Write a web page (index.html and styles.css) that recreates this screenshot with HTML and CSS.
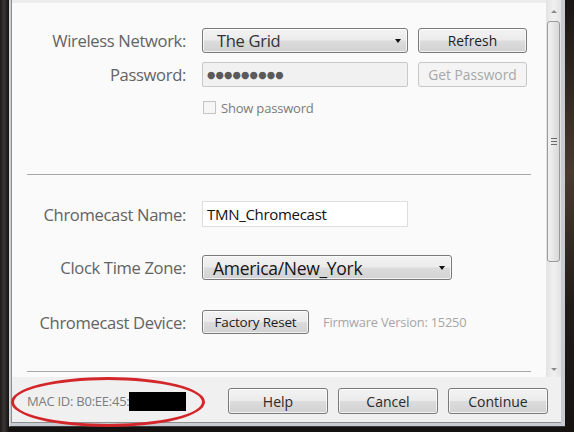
FILE: index.html
```html
<!DOCTYPE html>
<html>
<head>
<meta charset="utf-8">
<link rel="stylesheet" href="styles.css">
</head>
<body>
<div class="window">
  <div class="client">
    <div class="scroll">
      <div class="content">
        <div class="topstrip"></div>
        <div class="row r1">
          <span class="label">Wireless Network:</span>
          <div class="select sel-net"><span>The Grid</span><span class="arrow"></span></div>
          <button class="btn side">Refresh</button>
        </div>
        <div class="row r2">
          <span class="label">Password:</span>
          <div class="pwd">&#9679;&#9679;&#9679;&#9679;&#9679;&#9679;&#9679;&#9679;&#9679;</div>
          <button class="btn side disabled">Get Password</button>
        </div>
        <div class="check">
          <span class="box"></span><span class="checktext">Show password</span>
        </div>
        <div class="rule rule1"></div>
        <div class="row r3">
          <span class="label">Chromecast Name:</span>
          <div class="input">TMN_Chromecast</div>
        </div>
        <div class="row r4">
          <span class="label">Clock Time Zone:</span>
          <div class="select sel-tz"><span>America/New_York</span><span class="arrow"></span></div>
        </div>
        <div class="row r5">
          <span class="label">Chromecast Device:</span>
          <button class="btn reset">Factory Reset</button>
          <span class="fw">Firmware Version: 15250</span>
        </div>
        <div class="rule rule2"></div>
      </div>
      <div class="scrollbar">
        <span class="sarrow up"></span>
        <div class="thumb"><span class="grip"></span></div>
        <span class="sarrow down"></span>
      </div>
    </div>
    <div class="footer">
      <div class="mac">MAC ID: B0:EE:45:<span class="redact"></span></div>
      <div class="actions">
        <button class="btn foot">Help</button>
        <button class="btn foot">Cancel</button>
        <button class="btn foot">Continue</button>
      </div>
      <div class="circle"></div>
    </div>
  </div>
</div>
</body>
</html>
```
FILE: styles.css
```css
html, body {
  margin: 0;
  padding: 0;
}
body {
  width: 574px;
  height: 432px;
  overflow: hidden;
  background: linear-gradient(90deg, #1c1a19 0, #3a3633 4px, #141211 9px);
  font-family: "Open Sans", "Liberation Sans", sans-serif;
  position: relative;
}
body::after {
  content: "";
  position: absolute;
  right: 0;
  top: 0;
  width: 9px;
  height: 432px;
  background: linear-gradient(180deg, #1a1614 0, #4a3a30 40%, #221c19 70%, #151210 100%);
}
.window {
  margin-left: 9px;
  width: 557px;
  height: 427px;
  background: #c8ccd2;
  border-left: 1px solid #d8dade;
  border-right: 1px solid #5a5a5a;
  border-bottom: 1px solid #3a3a3a;
  box-sizing: border-box;
  padding: 0 4px 3px 1px;
}
.client {
  width: 550px;
  height: 423px;
  border-left: 1px solid #8e8f8f;
  border-bottom: 1px solid #8e8f8f;
  box-sizing: border-box;
  background: #f0f0f0;
  display: flex;
  flex-direction: column;
}
.scroll {
  display: flex;
  height: 377px;
  background: #fafafa;
}
.content {
  width: 534px;
  box-sizing: border-box;
  padding: 0 15px 0 15px;
  font-size: 16.6px;
  color: #636363;
}
.topstrip {
  height: 3px;
  margin: 0 -15px;
  background: #ececec;
}
.row {
  display: flex;
  align-items: center;
}
.label {
  width: 159px;
  margin-right: 16px;
  text-align: right;
  white-space: nowrap;
  letter-spacing: -0.35px;
}
.r1 { margin-top: 25px; height: 25px; }
.r2 { margin-top: 9px; height: 25px; }
.r3 { margin-top: 26px; height: 26px; }
.r4 { margin-top: 28px; height: 25px; }
.r5 { margin-top: 30px; height: 24px; }

.select, .btn {
  box-sizing: border-box;
  border: 1px solid #7a7a7a;
  border-radius: 3px;
  background: linear-gradient(180deg, #f3f3f3 0%, #ebebeb 48%, #dcdcdc 52%, #d2d2d2 100%);
  box-shadow: inset 0 0 0 1px rgba(255,255,255,0.7);
  color: #1e1e1e;
  font-family: "Open Sans", "Liberation Sans", sans-serif;
}
.select {
  height: 25px;
  display: flex;
  align-items: center;
  justify-content: space-between;
  padding: 0 6px 0 14px;
  font-size: 16.5px;
  letter-spacing: -0.3px;
  color: #333;
}
.arrow {
  width: 0;
  height: 0;
  border-left: 3.5px solid transparent;
  border-right: 3.5px solid transparent;
  border-top: 4px solid #111;
}
.sel-net { width: 206px; }
.sel-tz { width: 250px; padding-left: 10px; font-size: 17.5px; color: #151515; }
.btn {
  height: 25px;
  padding: 0;
  font-size: 13.8px;
}
.btn.side {
  width: 109px;
  margin-left: 10px;
}
.btn.disabled {
  color: #a8a8a8;
  border-color: #c6c6c6;
  background: #f4f4f4;
  box-shadow: none;
}
.pwd {
  width: 206px;
  height: 25px;
  box-sizing: border-box;
  border: 1px solid #c8c8c8;
  border-radius: 2px;
  background: #f1f1f1;
  color: #5a5a5a;
  font-size: 9.6px;
  letter-spacing: 0.15px;
  padding-left: 4px;
  display: flex;
  align-items: center;
  font-family: "DejaVu Sans", sans-serif;
}
.check {
  margin-top: 14px;
  padding-left: 176px;
  height: 13px;
  display: flex;
  align-items: center;
}
.box {
  width: 11px;
  height: 11px;
  border: 1px solid #c4c4c4;
  background: #f6f6f6;
}
.checktext {
  margin-left: 5px;
  font-size: 13px;
  color: #7a7a7a;
  letter-spacing: -0.2px;
}
.rule {
  height: 1px;
  background: #a8a8a8;
}
.rule1 { margin-top: 60px; }
.rule2 { margin-top: 37px; }
.input {
  width: 206px;
  height: 26px;
  box-sizing: border-box;
  border: 1px solid #dedede;
  background: #fff;
  color: #111;
  font-size: 15px;
  padding-left: 4px;
  display: flex;
  align-items: center;
  letter-spacing: -0.3px;
}
.btn.reset {
  width: 107px;
  height: 24px;
  font-size: 13.5px;
  letter-spacing: -0.2px;
}
.fw {
  margin-left: 14px;
  font-size: 12.8px;
  color: #a6a6a6;
  letter-spacing: -0.2px;
}
.scrollbar {
  width: 15px;
  box-sizing: border-box;
  background: linear-gradient(90deg, #e3e3e3, #f0f0f0 50%, #e3e3e3);
  display: flex;
  flex-direction: column;
  align-items: center;
}
.sarrow {
  width: 0;
  height: 0;
  border-left: 3px solid transparent;
  border-right: 3px solid transparent;
}
.sarrow.up {
  margin-top: 10px;
  border-bottom: 3px solid #8a8a8a;
}
.sarrow.down {
  margin-top: auto;
  margin-bottom: 6px;
  border-top: 3px solid #8a8a8a;
}
.thumb {
  margin-top: 8px;
  width: 13px;
  height: 241px;
  box-sizing: border-box;
  border: 1px solid #9a9a9a;
  border-radius: 3px;
  background: linear-gradient(90deg, #f2f2f2, #e6e6e6 50%, #d8d8d8);
  display: flex;
  align-items: center;
  justify-content: center;
}
.grip {
  width: 6px;
  height: 7px;
  background: repeating-linear-gradient(180deg, #6a6a6a 0 1px, transparent 1px 3px);
}
.footer {
  flex: 1;
  display: flex;
  align-items: center;
  justify-content: space-between;
  padding: 3px 13px 0 15px;
  position: relative;
}
.mac {
  font-size: 13px;
  color: #7d7d7d;
  display: flex;
  align-items: center;
  letter-spacing: -0.25px;
}
.redact {
  display: inline-block;
  width: 57px;
  height: 19px;
  background: #000;
}
.actions {
  display: flex;
  gap: 10px;
}
.btn.foot {
  width: 100px;
  height: 26px;
  font-size: 14px;
  color: #2a2a2a;
}
.circle {
  position: absolute;
  left: -1px;
  top: 0;
  width: 194px;
  height: 50px;
  box-sizing: border-box;
  border: 3px solid #d3262a;
  border-radius: 50%;
}
```
